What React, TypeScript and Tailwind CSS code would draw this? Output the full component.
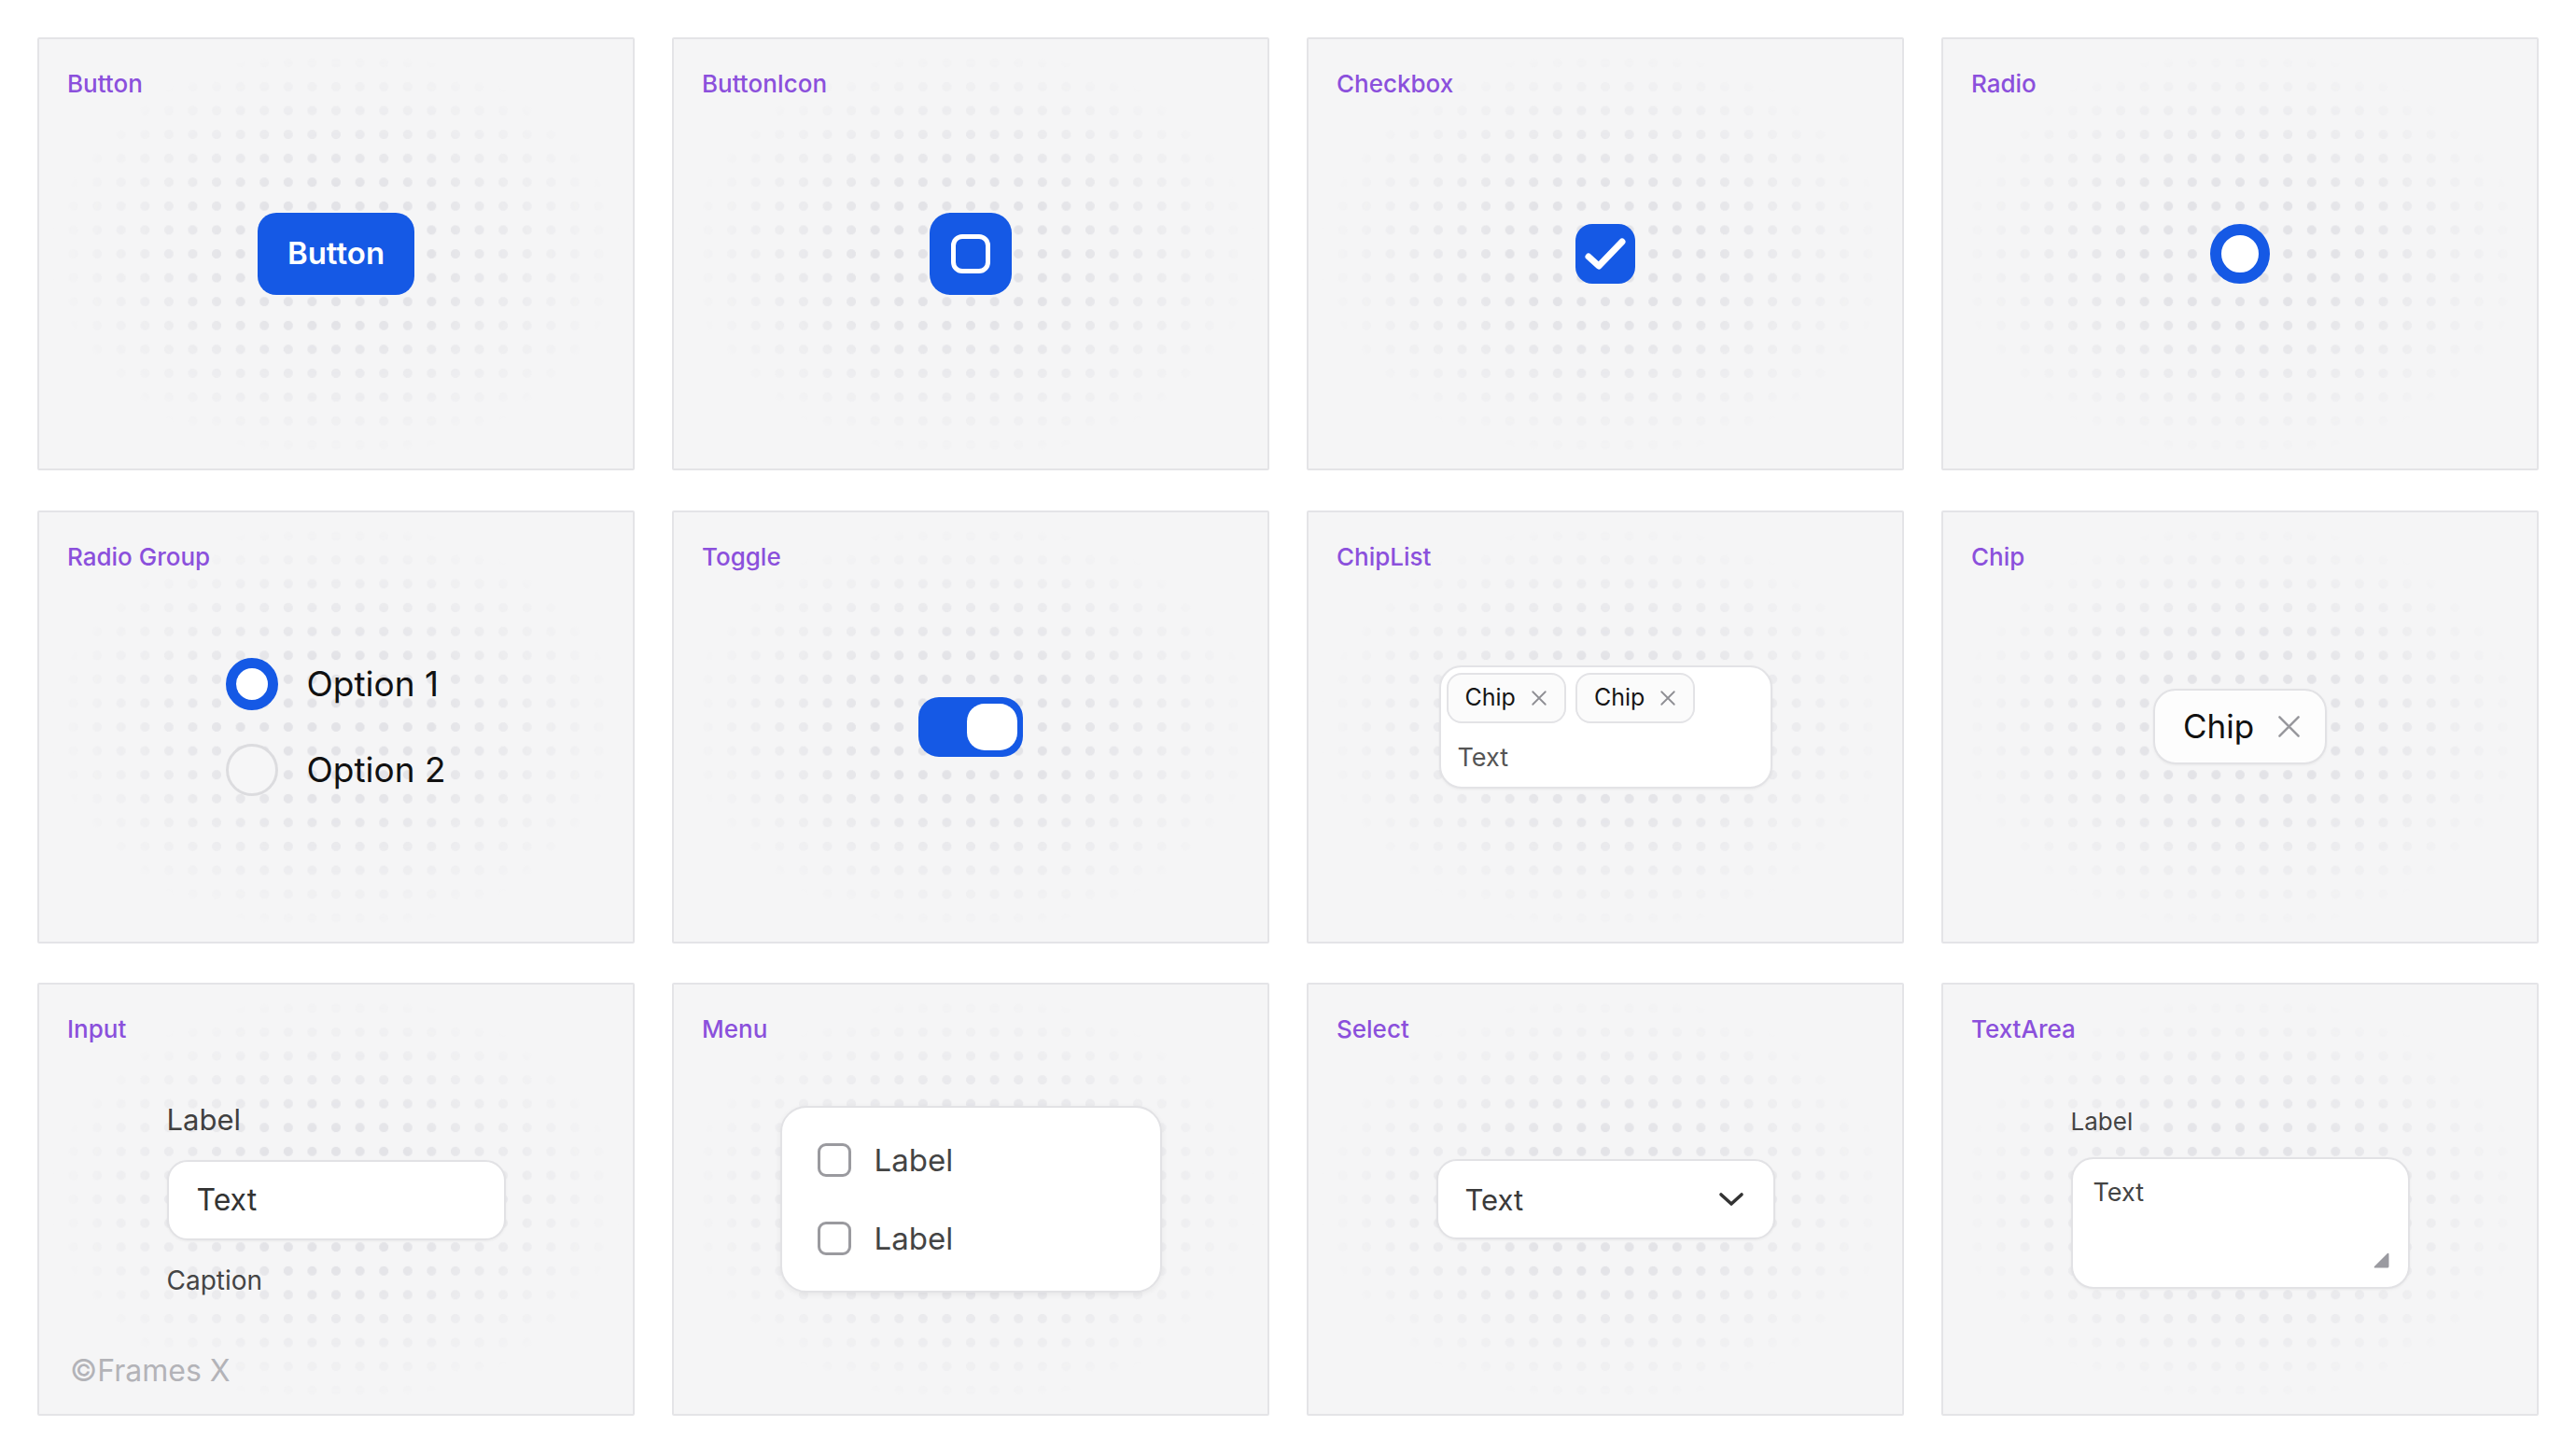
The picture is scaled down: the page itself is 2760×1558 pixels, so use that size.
import type { ReactNode } from "react";

const blue = "bg-[#1559e5]";

function Card({ title, children, footer }: { title: string; children: ReactNode; footer?: ReactNode }) {
  return (
    <div className="grid h-[464px] grid-cols-1 grid-rows-1 overflow-hidden rounded-[2px] border-2 border-[#e4e4e7] bg-[#f5f5f6]">
      <div className="col-start-1 row-start-1 bg-[radial-gradient(circle,#e3e3e7_4.6px,transparent_5.3px)] bg-center [background-size:25.6px_25.6px] [mask-image:radial-gradient(ellipse_50%_50%_at_center,black_32%,transparent_96%)]" />
      <div className="relative col-start-1 row-start-1 ml-[30px] mt-[35px] self-start justify-self-start text-[26px] font-medium leading-none text-[#8b50dc]">
        {title}
      </div>
      <div className="relative col-start-1 row-start-1 place-self-center">{children}</div>
      {footer}
    </div>
  );
}

function XIcon({ size, color, stroke }: { size: number; color: string; stroke: number }) {
  return (
    <svg width={size} height={size} viewBox="0 0 24 24" fill="none" stroke={color} strokeWidth={stroke} strokeLinecap="round">
      <path d="M3 3 21 21M21 3 3 21" />
    </svg>
  );
}

function Chip({ small }: { small?: boolean }) {
  if (small) {
    return (
      <div className="flex h-[54px] items-center gap-[16px] rounded-[16px] border-2 border-[#e3e3e6] bg-[#fbfbfb] pl-[18px] pr-[18px] text-[25px] text-[#161616]">
        <span className="leading-none">Chip</span>
        <XIcon size={18} color="#8e8e93" stroke={2.4} />
      </div>
    );
  }
  return (
    <div className="flex h-[81px] w-[186px] items-center gap-[24px] rounded-[24px] border-2 border-[#e2e2e5] bg-[#fdfdfd] pl-[30px] text-[35px] text-[#111] shadow-[0_1px_3px_rgba(0,0,0,0.05)]">
      <span className="leading-none">Chip</span>
      <XIcon size={27} color="#98989d" stroke={2.2} />
    </div>
  );
}

function MenuItem() {
  return (
    <div className="flex h-[84px] items-center gap-[25px] px-[24px]">
      <div className="h-[36px] w-[36px] rounded-[9px] border-[3.5px] border-[#9a9a9f]" />
      <span className="text-[33px] leading-none text-[#444]">Label</span>
    </div>
  );
}

export default function App() {
  return (
    <div className="grid min-h-[1558px] w-[2760px] grid-cols-4 gap-x-[40px] gap-y-[42px] bg-white p-[40px] [font-family:Inter,'Noto_Sans',sans-serif]">
      <Card title="Button">
        <button className={`flex h-[88px] w-[168px] items-center justify-center rounded-[20px] ${blue} text-[33px] font-semibold text-white`}>
          Button
        </button>
      </Card>

      <Card title="ButtonIcon">
        <div className={`flex h-[88px] w-[88px] items-center justify-center rounded-[22px] ${blue}`}>
          <div className="h-[42px] w-[42px] rounded-[12px] border-[5px] border-white" />
        </div>
      </Card>

      <Card title="Checkbox">
        <div className={`h-[64px] w-[64px] rounded-[18px] ${blue}`}>
          <svg width="64" height="64" viewBox="0 0 64 64" fill="none" stroke="white" strokeWidth="7" strokeLinecap="round" strokeLinejoin="round">
            <polyline points="14,35 25,45 50,19" />
          </svg>
        </div>
      </Card>

      <Card title="Radio">
        <div className="h-[64px] w-[64px] rounded-full border-[12px] border-[#1559e5] bg-white" />
      </Card>

      <Card title="Radio Group">
        <div className="flex flex-col gap-[36px]">
          <div className="flex items-center gap-[30px]">
            <div className="h-[56px] w-[56px] rounded-full border-[11px] border-[#1559e5] bg-white" />
            <span className="text-[37px] leading-none text-[#111]">Option 1</span>
          </div>
          <div className="flex items-center gap-[30px]">
            <div className="h-[56px] w-[56px] rounded-full border-[3px] border-[#dcdcdf] bg-[#f6f6f7]" />
            <span className="text-[37px] leading-none text-[#111]">Option 2</span>
          </div>
        </div>
      </Card>

      <Card title="Toggle">
        <div className={`flex h-[64px] w-[112px] items-center justify-end rounded-[22px] ${blue} pr-[6px]`}>
          <div className="h-[50px] w-[54px] rounded-[19px] bg-white" />
        </div>
      </Card>

      <Card title="ChipList">
        <div className="flex h-[132px] w-[357px] flex-col rounded-[24px] border-2 border-[#e3e3e6] bg-white p-[6px] shadow-[0_1px_3px_rgba(0,0,0,0.05)]">
          <div className="flex gap-[10px]">
            <Chip small />
            <Chip small />
          </div>
          <span className="mt-[23px] pl-[12px] text-[27px] leading-none text-[#555]">Text</span>
        </div>
      </Card>

      <Card title="Chip">
        <Chip />
      </Card>

      <Card
        title="Input"
        footer={
          <div className="relative col-start-1 row-start-1 mb-[30px] ml-[33px] self-end justify-self-start text-[32px] leading-none text-[#b3b3b8]">
            ©Frames X
          </div>
        }
      >
        <div className="flex flex-col items-start">
          <span className="text-[31px] leading-none text-[#404040]">Label</span>
          <div className="mt-[28px] flex h-[86px] w-[363px] items-center rounded-[22px] border-2 border-[#e2e2e5] bg-white px-[30px] text-[32px] text-[#333] shadow-[0_1px_3px_rgba(0,0,0,0.05)]">
            Text
          </div>
          <span className="mt-[29px] text-[28px] leading-none text-[#444]">Caption</span>
        </div>
      </Card>

      <Card title="Menu">
        <div className="flex w-[409px] flex-col rounded-[28px] border-2 border-[#e2e2e5] bg-white p-[14px] shadow-[0_2px_6px_rgba(0,0,0,0.06)]">
          <MenuItem />
          <MenuItem />
        </div>
      </Card>

      <Card title="Select">
        <div className="flex h-[86px] w-[363px] items-center justify-between rounded-[22px] border-2 border-[#e2e2e5] bg-white pl-[29px] pr-[31px] shadow-[0_1px_3px_rgba(0,0,0,0.05)]">
          <span className="text-[31px] leading-none text-[#3a3a3a]">Text</span>
          <svg width="28" height="16" viewBox="0 0 28 16" fill="none" stroke="#333" strokeWidth="3.6" strokeLinecap="round" strokeLinejoin="round">
            <polyline points="3,3 14,13 25,3" />
          </svg>
        </div>
      </Card>

      <Card title="TextArea">
        <div className="flex flex-col items-start">
          <span className="text-[26px] leading-none text-[#444]">Label</span>
          <div className="mt-[25px] flex h-[141px] w-[363px] flex-col justify-between rounded-[24px] border-2 border-[#e2e2e5] bg-white pb-[20px] pl-[22px] pr-[20px] pt-[22px] shadow-[0_1px_3px_rgba(0,0,0,0.05)]">
            <span className="text-[27px] leading-none text-[#444]">Text</span>
            <svg className="self-end" width="18" height="18" viewBox="0 0 18 18">
              <path d="M16 2 Q17.5 1 17.5 3 L17.5 16 Q17.5 17.5 16 17.5 L3 17.5 Q1 17.5 2 16 Z" fill="#9a9aa0" />
            </svg>
          </div>
        </div>
      </Card>
    </div>
  );
}
